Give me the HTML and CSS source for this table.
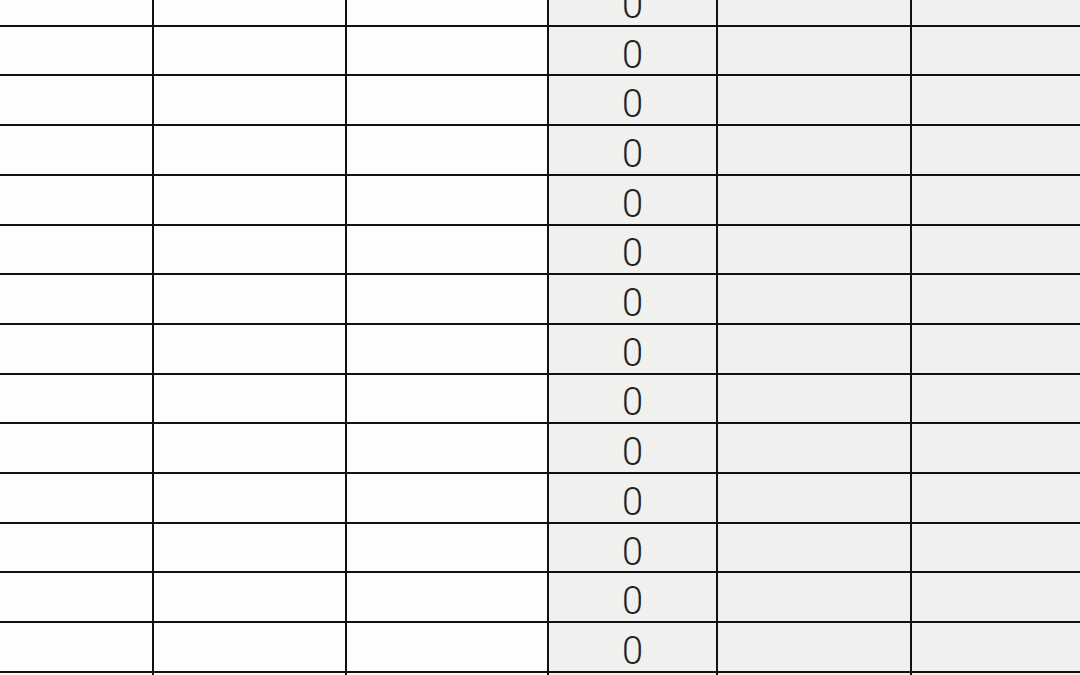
FILE: index.html
```html
<!DOCTYPE html>
<html>
<head>
<meta charset="utf-8">
<link rel="stylesheet" href="styles.css">
</head>
<body>
<div class="sheet">
  <div class="c c1"></div><div class="c c2"></div><div class="c c3"></div><div class="c c4 num">0</div><div class="c c5"></div><div class="c c6"></div>
  <div class="c c1"></div><div class="c c2"></div><div class="c c3"></div><div class="c c4 num">0</div><div class="c c5"></div><div class="c c6"></div>
  <div class="c c1"></div><div class="c c2"></div><div class="c c3"></div><div class="c c4 num">0</div><div class="c c5"></div><div class="c c6"></div>
  <div class="c c1"></div><div class="c c2"></div><div class="c c3"></div><div class="c c4 num">0</div><div class="c c5"></div><div class="c c6"></div>
  <div class="c c1"></div><div class="c c2"></div><div class="c c3"></div><div class="c c4 num">0</div><div class="c c5"></div><div class="c c6"></div>
  <div class="c c1"></div><div class="c c2"></div><div class="c c3"></div><div class="c c4 num">0</div><div class="c c5"></div><div class="c c6"></div>
  <div class="c c1"></div><div class="c c2"></div><div class="c c3"></div><div class="c c4 num">0</div><div class="c c5"></div><div class="c c6"></div>
  <div class="c c1"></div><div class="c c2"></div><div class="c c3"></div><div class="c c4 num">0</div><div class="c c5"></div><div class="c c6"></div>
  <div class="c c1"></div><div class="c c2"></div><div class="c c3"></div><div class="c c4 num">0</div><div class="c c5"></div><div class="c c6"></div>
  <div class="c c1"></div><div class="c c2"></div><div class="c c3"></div><div class="c c4 num">0</div><div class="c c5"></div><div class="c c6"></div>
  <div class="c c1"></div><div class="c c2"></div><div class="c c3"></div><div class="c c4 num">0</div><div class="c c5"></div><div class="c c6"></div>
  <div class="c c1"></div><div class="c c2"></div><div class="c c3"></div><div class="c c4 num">0</div><div class="c c5"></div><div class="c c6"></div>
  <div class="c c1"></div><div class="c c2"></div><div class="c c3"></div><div class="c c4 num">0</div><div class="c c5"></div><div class="c c6"></div>
  <div class="c c1"></div><div class="c c2"></div><div class="c c3"></div><div class="c c4 num">0</div><div class="c c5"></div><div class="c c6"></div>
  <div class="c c1"></div><div class="c c2"></div><div class="c c3"></div><div class="c c4 num">0</div><div class="c c5"></div><div class="c c6"></div>
</div>
</body>
</html>
```

FILE: styles.css
```css
html, body {
  margin: 0;
  padding: 0;
  background: #fdfdfb;
  overflow: hidden;
  width: 1080px;
  height: 675px;
}
.sheet {
  display: grid;
  grid-template-columns: 154px 193px 202px 169px 194px 1fr;
  grid-auto-rows: 49.7px;
  margin-top: -22.9px;
  font-family: Roboto, "Liberation Sans", Arial, sans-serif;
}
.c {
  box-sizing: border-box;
  border-right: 2px solid #111;
  border-bottom: 2px solid #111;
  background: #fdfdfb;
}
.c4, .c5, .c6 {
  background: #f0f0ee;
}
.c6 {
  border-right: none;
}
.num {
  display: flex;
  align-items: center;
  justify-content: center;
  padding-top: 8px;
  font-size: 38px;
  font-weight: 300;
  color: #222;
}
```
